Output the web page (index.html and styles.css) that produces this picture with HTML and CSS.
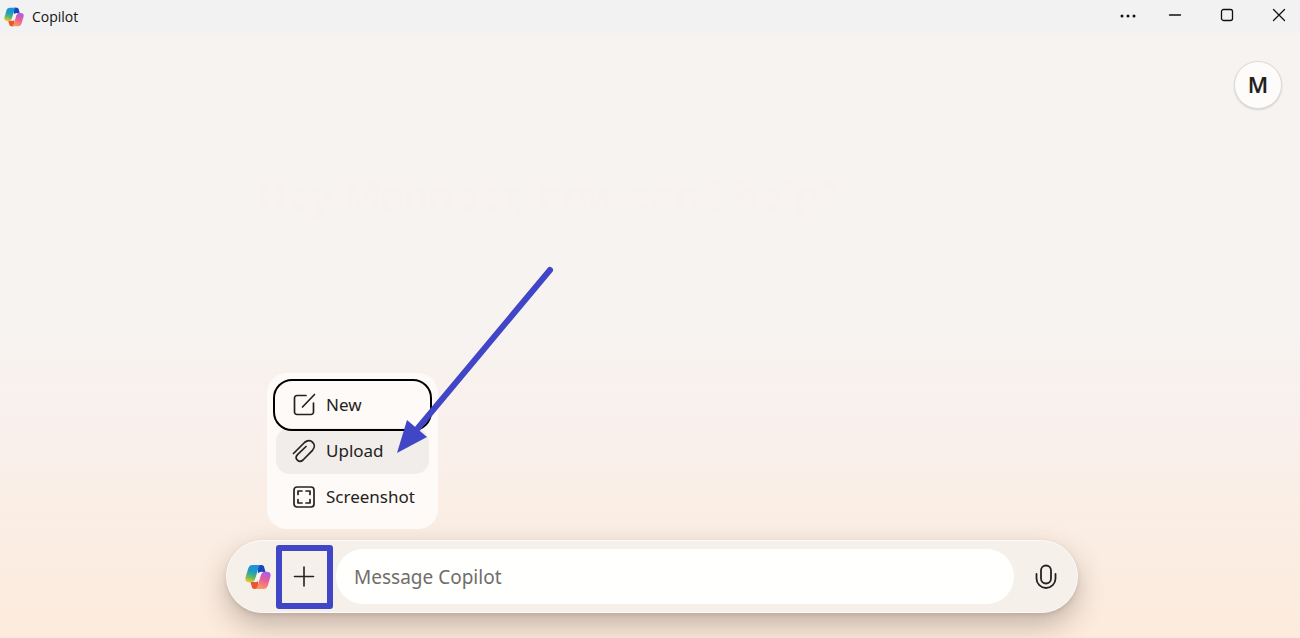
FILE: index.html
```html
<!DOCTYPE html>
<html lang="en">
<head>
    <meta charset="UTF-8">
    <meta name="viewport" content="width=device-width, initial-scale=1.0">
    <title>Copilot</title>
    <link rel="stylesheet" href="styles.css">
</head>
<body>
    <svg class="defs" aria-hidden="true">
        <defs>
            <linearGradient id="cool" x1="0.6" y1="0" x2="0.35" y2="1">
                <stop offset="0" stop-color="#1b8fe6"/>
                <stop offset="0.4" stop-color="#1f9bc0"/>
                <stop offset="0.72" stop-color="#62b862"/>
                <stop offset="1" stop-color="#f0c52c"/>
            </linearGradient>
            <linearGradient id="warm" x1="0.7" y1="0" x2="0.35" y2="1">
                <stop offset="0" stop-color="#a95ef0"/>
                <stop offset="0.45" stop-color="#e85c98"/>
                <stop offset="1" stop-color="#ff9a5e"/>
            </linearGradient>
            <symbol id="copilot" viewBox="0 0 26 26">
                <path fill="#1746b8" d="M13 1h3.500c1.500 0 2.300.8 2.700 2.200L20.500 8h-3c-2 0-3.200.8-4.500 2.500z"/>
                <path fill="#e9552f" d="M13 25H9.500c-1.500 0-2.300-.8-2.700-2.200L5.500 18h3c2 0 3.200-.8 4.500-2.500z"/>
                <path fill="url(#cool)" d="M7.500 1H16c-1.500.4-2 1.500-2.500 3l-3.200 10.500C9.500 17 8.300 18.300 6 18.300H4c-3 0-4.200-2-3.400-5L3.200 4.500C4 2 5.200 1 7.500 1z"/>
                <path fill="url(#warm)" d="M18.500 25H10c1.500-.4 2-1.500 2.500-3l3.200-10.500c.8-2.500 2-3.800 4.300-3.800h2c3 0 4.200 2 3.400 5l-2.600 8.800c-.8 2.500-2 3.500-4.300 3.500z"/>
                <path fill="#f9f4f1" d="M18 7.800c-3.800 0-5.400 1-6.300 4L9.800 18.200c2.700-.2 4.100-1 5-4l1.200-4c.4-1.300.9-2 2-2.400z"/>
            </symbol>
        </defs>
    </svg>

    <header class="titlebar">
        <svg class="titlebar-logo" aria-hidden="true"><use href="#copilot"/></svg>
        <span class="titlebar-name">Copilot</span>
        <button class="window-button" aria-label="More">
            <svg viewBox="0 0 16 16" class="dots"><circle cx="2" cy="9" r="1.500"/><circle cx="8" cy="9" r="1.500"/><circle cx="14" cy="9" r="1.500"/></svg>
        </button>
        <button class="window-button" aria-label="Minimize">
            <svg viewBox="0 0 16 16"><path d="M2.500 8h11"/></svg>
        </button>
        <button class="window-button" aria-label="Maximize">
            <svg viewBox="0 0 16 16"><rect x="2.500" y="2.500" width="11" height="11" rx="2"/></svg>
        </button>
        <button class="window-button" aria-label="Close">
            <svg viewBox="0 0 16 16"><path d="M2.500 2.500l11 11M13.500 2.500l-11 11"/></svg>
        </button>
    </header>

    <main class="page">
        <button class="avatar" aria-label="Account">M</button>
        <h1 class="greeting">Hey Mahnoor, how can I help?</h1>

        <form class="composer">
            <svg class="composer-logo" aria-hidden="true"><use href="#copilot"/></svg>
            <button type="button" class="add-button" aria-label="Add">
                <svg viewBox="0 0 24 24"><path d="M11 2v19M1.500 11.500h19"/></svg>
            </button>
            <input class="message" type="text" placeholder="Message Copilot" aria-label="Message Copilot">
            <button type="button" class="mic-button" aria-label="Talk to Copilot">
                <svg viewBox="0 0 24 26"><rect x="7" y="1.500" width="10" height="18" rx="5"/><path d="M2.500 10v4.500a9.500 9.500 0 0 0 19 0V10"/></svg>
            </button>

            <div class="menu">
                <button type="button" class="menu-item focused">
                    <svg viewBox="0 0 24 24"><path d="M14 2.500H5A2.500 2.500 0 0 0 2.500 5v14A2.500 2.500 0 0 0 5 21.500h14a2.500 2.500 0 0 0 2.500-2.500v-9M10.500 14L22.500 1.500"/></svg>
                    New
                </button>
                <button type="button" class="menu-item hovered">
                    <svg viewBox="0 0 24 24"><path d="M1.500 14.500L12.500 3.500c6-5.200 13.200 2 8 7.800L11 21c-4 3.600-9.200-1.400-5.500-5.400L14 7.500"/></svg>
                    Upload
                </button>
                <button type="button" class="menu-item">
                    <svg viewBox="0 0 24 24"><rect x="2" y="2" width="20" height="20" rx="3"/><path d="M6 9.500V6h4M14 6h4v3.500M18 14.500V18h-4M10 18H6v-3.500"/></svg>
                    Screenshot
                </button>
                <svg class="arrow" viewBox="0 0 170 200" aria-hidden="true">
                    <path class="arrow-line" d="M160 10L28 168"/>
                    <path class="arrow-head" d="M7 193l10-33 20 17z"/>
                </svg>
            </div>
        </form>
    </main>
</body>
</html>
```

FILE: styles.css
```css
* {
    box-sizing: border-box;
}
body {
    margin: 0;
    min-height: 100vh;
    display: flex;
    flex-direction: column;
    font-family: "Noto Sans", "Open Sans", sans-serif;
    color: #242221;
    background: #f7f3f0;
}
button {
    padding: 0;
    border: none;
    background: none;
    font-family: inherit;
    color: inherit;
    cursor: pointer;
}
svg {
    fill: none;
    stroke-linecap: round;
    stroke-linejoin: round;
}
.defs {
    position: absolute;
    width: 0;
    height: 0;
}

/* Title bar */
.titlebar {
    display: flex;
    align-items: center;
    height: 33px;
    padding-left: 4px;
    background: #f2f2f2;
}
.titlebar-logo {
    width: 20px;
    height: 20px;
}
.titlebar-name {
    margin-left: 8px;
    margin-right: auto;
    font-family: "Open Sans", "Noto Sans", sans-serif;
    font-size: 14px;
    line-height: 18px;
    color: #111;
}
.window-button {
    display: flex;
    align-items: center;
    justify-content: center;
    width: 52px;
    height: 30px;
    align-self: flex-start;
}
.window-button:last-child {
    width: 42px;
    margin-left: 5px;
}
.window-button svg {
    width: 16px;
    height: 16px;
    stroke: #111;
    stroke-width: 1.3;
}
.window-button .dots {
    fill: #111;
    stroke: none;
}
.window-button:first-of-type {
    width: 42px;
}

/* Page */
.page {
    flex: 1;
    display: flex;
    flex-direction: column;
    padding: 28px 18px 25px 22px;
    background: linear-gradient(#f7f3f0 0%, #f7f3f0 50%, #f9f0ed 64%, #faeee5 78%, #fdebdd 100%);
}
.avatar {
    align-self: flex-end;
    width: 48px;
    height: 48px;
    border: 1px solid #dedad8;
    border-radius: 50%;
    background: #fdfcfb;
    box-shadow: 0 1px 2px rgba(0, 0, 0, 0.15);
    font-size: 22px;
    line-height: 44px;
    padding-bottom: 2px;
    font-weight: 600;
}
.greeting {
    width: 100%;
    max-width: 788px;
    margin: 61px auto 0;
    font-size: 40px;
    line-height: 50px;
    font-weight: 600;
    color: #f7f2ef;
}

/* Message bar */
.composer {
    position: relative;
    display: flex;
    align-items: center;
    width: 100%;
    max-width: 852px;
    height: 73px;
    margin: auto auto 0;
    padding-left: 18px;
    border: 1px solid #fffaf6;
    border-radius: 37px;
    background: #f6f0eb;
    box-shadow: 0 12px 28px rgba(70, 55, 45, 0.32), 0 2px 4px rgba(70, 55, 45, 0.12);
}
.composer-logo {
    width: 26px;
    height: 26px;
    margin-right: 5px;
}
.add-button {
    display: flex;
    align-items: center;
    justify-content: center;
    width: 57px;
    height: 64px;
    margin-right: 3px;
    border: 6px solid #4046c6;
    border-radius: 3px;
}
.add-button svg {
    width: 24px;
    height: 24px;
    stroke: #242221;
    stroke-width: 1.6;
}
.message {
    flex: 1;
    min-width: 0;
    height: 55px;
    padding: 0 18px;
    border: none;
    border-radius: 28px;
    background: #fffffd;
    font-family: inherit;
    font-size: 19px;
    color: #242221;
}
.message::placeholder {
    color: #706d6b;
    opacity: 1;
}
.mic-button {
    display: flex;
    align-items: center;
    justify-content: center;
    width: 63px;
    height: 55px;
}
.mic-button svg {
    width: 24px;
    height: 26px;
    stroke: #242221;
    stroke-width: 1.8;
}

/* Menu above the plus button */
.menu {
    position: absolute;
    left: 40px;
    bottom: 83px;
    width: 171px;
    padding: 9px;
    border-radius: 20px;
    background: #fefaf7;
}
.menu-item {
    display: flex;
    align-items: center;
    gap: 10px;
    width: 100%;
    height: 46px;
    padding-left: 16px;
    border-radius: 14px;
    font-size: 17px;
    line-height: 22px;
    padding-bottom: 1px;
}
.menu-item svg {
    flex: none;
    width: 24px;
    height: 24px;
    stroke: #242221;
    stroke-width: 1.7;
}
.focused {
    position: relative;
    outline: 2px solid #000;
    outline-offset: 1px;
    border-radius: 16px;
    background: #fefaf7;
}
.hovered {
    background: #f0edeb;
}
.arrow {
    position: absolute;
    left: 123px;
    top: -113px;
    width: 170px;
    height: 200px;
    pointer-events: none;
}
.arrow-line {
    stroke: #4046c6;
    stroke-width: 6;
}
.arrow-head {
    fill: #4046c6;
}
```
